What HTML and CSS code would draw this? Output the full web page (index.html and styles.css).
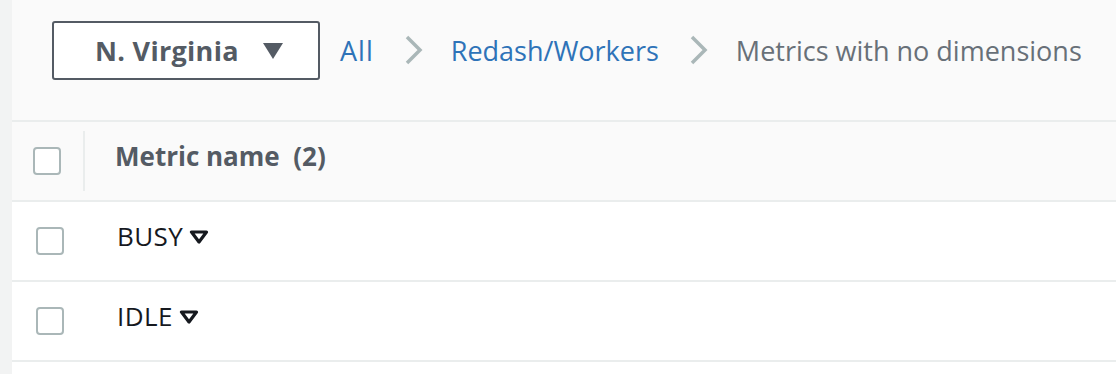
FILE: index.html
```html
<!DOCTYPE html>
<html>
<head>
<meta charset="utf-8">
<link rel="stylesheet" href="styles.css">
</head>
<body>
<div class="page">
  <div class="strip"></div>
  <div class="main">
    <div class="topbar">
      <div class="region">
        <span class="region-label">N. Virginia</span>
        <svg class="region-caret" width="20" height="16" viewBox="0 0 20 16"><polygon points="0,0 20,0 10,16" fill="#545b64"/></svg>
      </div>
      <nav class="crumbs">
        <a class="crumb link all">All</a>
        <svg class="chev" width="18" height="30" viewBox="0 0 18 30"><polyline points="2,2 15,15 2,28" fill="none" stroke="#aab7b8" stroke-width="3.5"/></svg>
        <a class="crumb link">Redash/Workers</a>
        <svg class="chev" width="18" height="30" viewBox="0 0 18 30"><polyline points="2,2 15,15 2,28" fill="none" stroke="#aab7b8" stroke-width="3.5"/></svg>
        <span class="crumb current">Metrics with no dimensions</span>
      </nav>
    </div>
    <div class="table">
      <div class="row head">
        <div class="cell-check head-check"><span class="box"></span></div>
        <div class="divider"></div>
        <div class="cell-name head-name">Metric name&nbsp; (2)</div>
      </div>
      <div class="row">
        <div class="cell-check"><span class="box"></span></div>
        <div class="cell-name">BUSY<svg class="tri" width="20" height="14" viewBox="0 0 20 14"><polygon points="2.5,2 17.5,2 10,12" fill="none" stroke="#16191f" stroke-width="3.2" stroke-linejoin="round"/></svg></div>
      </div>
      <div class="row">
        <div class="cell-check"><span class="box"></span></div>
        <div class="cell-name">IDLE<svg class="tri" width="20" height="14" viewBox="0 0 20 14"><polygon points="2.5,2 17.5,2 10,12" fill="none" stroke="#16191f" stroke-width="3.2" stroke-linejoin="round"/></svg></div>
      </div>
    </div>
  </div>
</div>
</body>
</html>
```

FILE: styles.css
```css
html, body {
  margin: 0;
  padding: 0;
  background: #ffffff;
  font-family: "Open Sans", "Noto Sans", sans-serif;
}
.page {
  display: flex;
  min-height: 374px;
}
.strip {
  width: 12px;
  flex: none;
  background: #f2f3f3;
}
.main {
  flex: 1;
  background: #ffffff;
}
.topbar {
  height: 122px;
  box-sizing: border-box;
  background: #fafafa;
  border-bottom: 2px solid #eaeded;
  display: flex;
  align-items: center;
  padding-left: 40px;
  padding-bottom: 20px;
}
.region {
  width: 268px;
  height: 59px;
  box-sizing: border-box;
  border: 2px solid #545b64;
  border-radius: 3px;
  background: #ffffff;
  display: flex;
  align-items: center;
  padding-left: 41px;
}
.region-label {
  font-size: 27px;
  font-weight: 700;
  color: #545b64;
  letter-spacing: 0.3px;
}
.region-caret {
  margin-left: 24px;
  margin-top: 2px;
}
.crumbs {
  display: flex;
  align-items: center;
  margin-left: 20px;
  font-size: 27px;
}
.crumb {
  white-space: nowrap;
}
.all {
  letter-spacing: 1px;
}
.link {
  color: #2e73b8;
}
.current {
  color: #687078;
}
.chev {
  margin: 0 28px 0 31px;
  flex: none;
}
.table {
  display: flex;
  flex-direction: column;
}
.row {
  height: 80px;
  box-sizing: border-box;
  border-bottom: 2px solid #eaeded;
  display: flex;
  align-items: center;
  background: #ffffff;
}
.row.head {
  background: #fafafa;
}
.cell-check {
  width: 71px;
  flex: none;
  display: flex;
  padding-left: 24px;
  box-sizing: border-box;
}
.head-check {
  padding-left: 21px;
  width: 71px;
}
.box {
  width: 28px;
  height: 28px;
  box-sizing: border-box;
  border: 2px solid #aab7b8;
  border-radius: 4px;
  background: #ffffff;
}
.divider {
  width: 2px;
  height: 60px;
  background: #eaeded;
  flex: none;
}
.cell-name {
  padding-left: 34px;
  padding-bottom: 10px;
  font-size: 26px;
  letter-spacing: 0.4px;
  color: #16191f;
  display: flex;
  align-items: center;
}
.head-name {
  padding-left: 30px;
  font-weight: 700;
  color: #545b64;
  letter-spacing: 0;
}
.tri {
  margin-left: 6px;
  margin-top: 1px;
}
```
